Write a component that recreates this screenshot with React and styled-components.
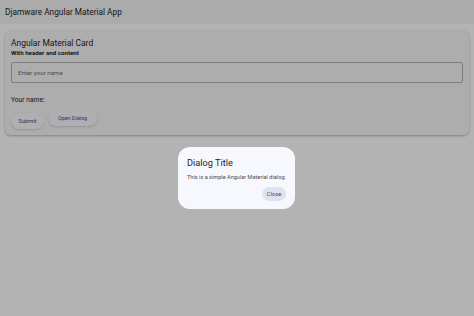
import React from "react";
import styled, { createGlobalStyle } from "styled-components";

const Global = createGlobalStyle`
  html, body { margin: 0; padding: 0; }
  body {
    background: #b3b3b3;
    font-family: Roboto, "Noto Sans", sans-serif;
    width: 474px;
    height: 316px;
    overflow: hidden;
  }
`;

const Toolbar = styled.header`
  height: 24px;
  background: #ababab;
  display: flex;
  align-items: center;
  padding: 0 6px 0 5px;
  font-size: 8.3px;
  color: #151515;
  box-sizing: border-box;
`;

const Main = styled.main`
  padding: 6px 5px;
`;

const Card = styled.section`
  background: #adadad;
  border-radius: 6px;
  box-shadow: 0 1px 2px rgba(0,0,0,0.18), 0 1px 3px rgba(0,0,0,0.1);
  padding: 7px 6px 6px;
  display: flex;
  flex-direction: column;
`;

const CardTitle = styled.div`
  font-size: 8.5px;
  color: #151515;
  line-height: 12px;
`;

const CardSubtitle = styled.div`
  font-size: 6.2px;
  font-weight: 700;
  color: #151515;
  line-height: 9px;
`;

const Field = styled.div`
  margin-top: 4px;
  height: 21px;
  box-sizing: border-box;
  border: 1px solid #7d7d7d;
  border-radius: 2px;
  display: flex;
  align-items: center;
  padding: 0 6px;
  font-size: 6.2px;
  color: #4e4e4e;
`;

const Label = styled.div`
  margin-top: 13px;
  font-size: 6.7px;
  line-height: 8px;
  color: #151515;
`;

const Buttons = styled.div`
  display: flex;
  gap: 4px;
  margin-top: 6px;
  align-items: flex-start;
`;

const Pill = styled.button`
  border: none;
  font-family: inherit;
  height: 16px;
  width: ${p => p.$w}px;
  padding: 0;
  border-radius: 8px;
  background: #afafb2;
  box-shadow: 0 1px 2px rgba(0,0,0,0.15);
  margin-top: ${p => p.$offset}px;
  display: flex;
  align-items: center;
  justify-content: center;
`;

const PillText = styled.span`
  font-size: 6px;
  zoom: ${p => p.$z};
  color: #2c3560;
  white-space: nowrap;
`;

const Dialog = styled.div`
  position: absolute;
  left: 178px;
  top: 147px;
  width: 117px;
  height: 62px;
  box-sizing: border-box;
  background: #f7f8fd;
  border-radius: 12px;
  padding: 10px 9px 0;
  display: flex;
  flex-direction: column;
`;

const DialogTitle = styled.div`
  font-size: 9.2px;
  color: #1b1b1f;
  line-height: 11px;
`;

const DialogText = styled.div`
  margin-top: 6px;
  font-size: 6px;
  zoom: 0.93;
  white-space: nowrap;
  color: #4a4b54;
`;

const DialogActions = styled.div`
  display: flex;
  justify-content: flex-end;
  margin-top: 7px;
`;

const CloseBtn = styled.button`
  border: none;
  font-family: inherit;
  height: 14px;
  width: 24px;
  padding: 0;
  border-radius: 7px;
  background: #dfe3f1;
  display: flex;
  align-items: center;
  justify-content: center;
`;

const CloseText = styled.span`
  font-size: 6px;
  zoom: 0.98;
  color: #3a4a7a;
`;

export default function App() {
  return (
    <>
      <Global />
      <Toolbar>Djamware Angular Material App</Toolbar>
      <Main>
        <Card>
          <CardTitle>Angular Material Card</CardTitle>
          <CardSubtitle>With header and content</CardSubtitle>
          <Field>Enter your name</Field>
          <Label>Your name:</Label>
          <Buttons>
            <Pill $w={33} $offset={3}><PillText $z={0.95}>Submit</PillText></Pill>
            <Pill $w={49} $offset={0}><PillText $z={0.9}>Open Dialog</PillText></Pill>
          </Buttons>
        </Card>
      </Main>
      <Dialog>
        <DialogTitle>Dialog Title</DialogTitle>
        <DialogText>This is a simple Angular Material dialog.</DialogText>
        <DialogActions>
          <CloseBtn><CloseText>Close</CloseText></CloseBtn>
        </DialogActions>
      </Dialog>
    </>
  );
}
